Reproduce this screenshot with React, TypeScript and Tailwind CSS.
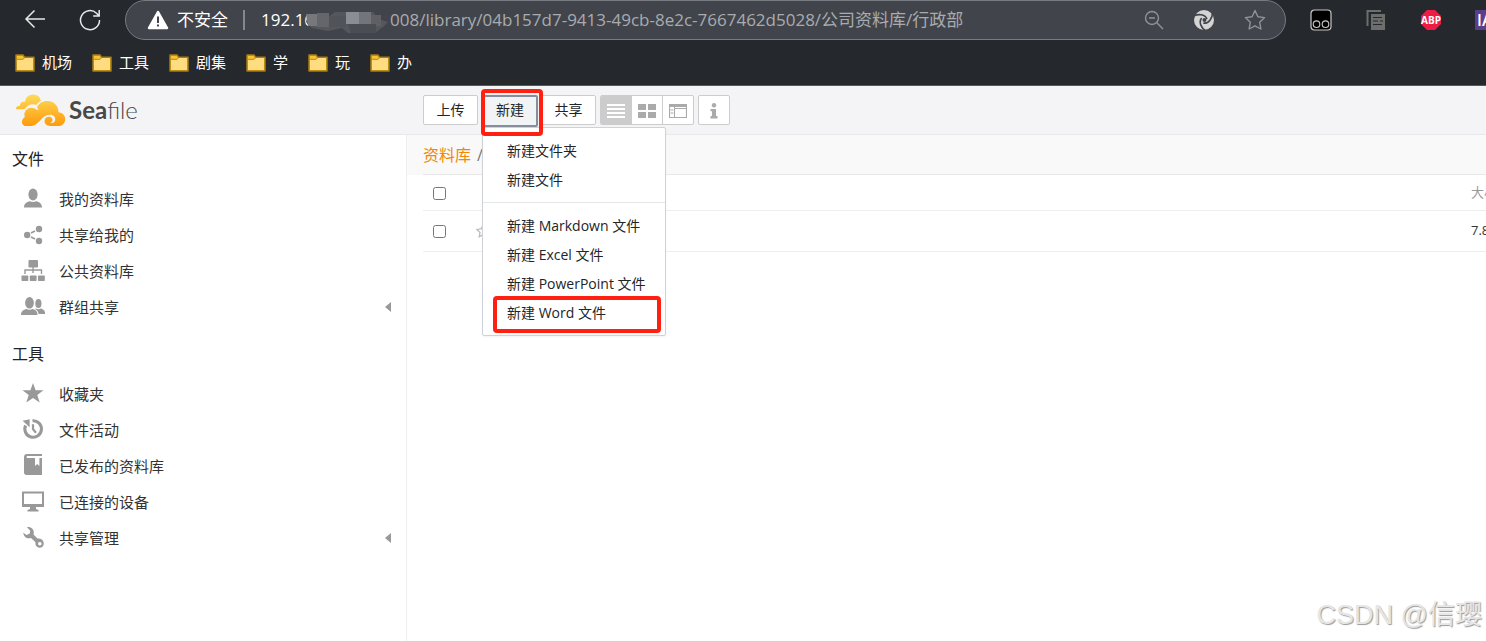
import { ReactNode } from "react";

const bookmarks = ["机场", "工具", "剧集", "学", "玩", "办"];

interface NavItem {
  label: string;
  icon: ReactNode;
  expandable?: boolean;
}

const fileItems: NavItem[] = [
  {
    label: "我的资料库",
    icon: (
      <>
        <ellipse cx="12" cy="8.5" rx="4.6" ry="6" />
        <path d="M3 21.5c0-4 2.5-5.5 6-6.3 1.800 1 4.200 1 6 0 3.500.8 6 2.300 6 6.300z" />
      </>
    ),
  },
  {
    label: "共享给我的",
    icon: (
      <>
        <circle cx="6.200" cy="13" r="3.200" />
        <circle cx="18" cy="7" r="3.200" />
        <circle cx="18" cy="19" r="3.200" />
        <path d="M10 11l4-2M10 15l4 2" stroke="currentColor" strokeWidth="1.800" />
      </>
    ),
  },
  {
    label: "公共资料库",
    icon: (
      <>
        <rect x="7.500" y="2" width="9.500" height="7.500" rx="0.8" />
        <path d="M12 9v6M4 16v-4h16.500v4" fill="none" stroke="currentColor" strokeWidth="1.400" />
        <rect x="0.5" y="17.500" width="6.800" height="5.500" rx="0.8" />
        <rect x="8.800" y="17.500" width="6.800" height="5.500" rx="0.8" />
        <rect x="17" y="17.500" width="6.800" height="5.500" rx="0.8" />
      </>
    ),
  },
  {
    label: "群组共享",
    expandable: true,
    icon: (
      <>
        <path d="M0 21c0-3.800 2.500-5.200 5.500-6 1.800 1 4.200 1 6 0 3 .8 5 2.200 5 6z" />
        <ellipse cx="8.500" cy="8.800" rx="4.400" ry="5.800" />
        <ellipse cx="17.400" cy="9.500" rx="3.100" ry="4.500" />
        <path d="M14.800 14.600c1.600.9 3.500.9 5 0 2.400.6 4.400 2 4.400 5.400h-6.600c-.3-2.300-1.500-4-3.600-5z" />
      </>
    ),
  },
];

const toolItems: NavItem[] = [
  {
    label: "收藏夹",
    icon: <path d="M12 2l2.600 7.200H22.500l-6.200 4.700 2.400 7.600L12 17l-6.700 4.500 2.400-7.600L1.500 9.200h7.900z" />,
  },
  {
    label: "文件活动",
    icon: (
      <>
        <path d="M11.500 3.700a8.300 8.300 0 1 1-6.900 4.800" fill="none" stroke="currentColor" strokeWidth="3" />
        <path d="M1.600 3.700l7-1.400v7.900z" />
        <path d="M12 7.200v5l3 3.600" fill="none" stroke="currentColor" strokeWidth="2.200" />
      </>
    ),
  },
  {
    label: "已发布的资料库",
    icon: (
      <path d="M6 1h15v2H6.500C5.300 3 5.300 5 6.500 5H14v8l2.200-2 2.200 2V5H21v17H5.500C4 22 3 21 3 19.500V4c0-2 1.200-3 3-3z" />
    ),
  },
  {
    label: "已连接的设备",
    icon: (
      <path
        fillRule="evenodd"
        d="M1 2.500h22V18h-8v2l2.500 1v1.500h-11V21L9 20v-2H1zM3 4.500V15h18V4.500z"
      />
    ),
  },
  {
    label: "共享管理",
    expandable: true,
    icon: (
      <path
        fillRule="evenodd"
        d="M6 2.200c3.300-.7 6.700 1.600 6.800 5 0 .9-.1 1.500-.3 2.200l4 4.200c3.400-.4 6.100 1.500 6.300 4.700.2 3-2.500 5.200-5.300 4.300-2.400-.8-3.500-3-3-5.300l-4.500-4.300c-4 1.300-7.400-1.200-7.700-5.200L5.600 9.900l3.200-1.300.4-2.800zM18.800 16.900a1.800 1.800 0 1 0 .1 3.600 1.800 1.800 0 0 0-.1-3.600z"
      />
    ),
  },
];

const officeTypes = ["Markdown", "Excel", "PowerPoint"];

const NavSection = ({ title, items }: { title: string; items: NavItem[] }) => (
  <section className="mb-[17px]">
    <h3 className="mb-2.5 pl-3 text-base leading-6 text-[#222]">{title}</h3>
    <ul>
      {items.map((item) => (
        <li key={item.label}>
          <a href="#" className="flex h-9 items-center gap-3.5 pr-[15px] pl-[21px] text-[15px] text-[#333]">
            <svg viewBox="0 0 24 24" className="-mt-0.5 size-6 shrink-0 text-[#999]" fill="currentColor">
              {item.icon}
            </svg>
            <span>{item.label}</span>
            {item.expandable && (
              <svg viewBox="0 0 6 10" className="ml-auto h-2.5 w-1.5" fill="#999">
                <path d="M6 0v10L0 5z" />
              </svg>
            )}
          </a>
        </li>
      ))}
    </ul>
  </section>
);

const MenuItem = ({ children, marked }: { children: ReactNode; marked?: boolean }) => (
  <li className="relative">
    <button className="block h-[29px] w-full px-6 text-left text-sm whitespace-nowrap text-[#212529]">{children}</button>
    {marked && (
      <span className="pointer-events-none absolute -top-0.5 right-1 -bottom-1.5 left-2.5 rounded border-4 border-[#ff2012]" />
    )}
  </li>
);

const Logo = () => (
  <a href="#" className="flex items-center gap-[3px]" aria-label="Seafile">
    <svg viewBox="0 0 50 33" className="h-[33px] w-[50px]">
      <defs>
        <linearGradient id="cloud" x1="0" y1="0" x2="0" y2="33" gradientUnits="userSpaceOnUse">
          <stop offset="0" stopColor="#fcdc5a" />
          <stop offset="1" stopColor="#ff9808" />
        </linearGradient>
      </defs>
      <path
        fill="url(#cloud)"
        d="M0 14.500c0-1.800 2-2.800 4-2.800C3.800 9 6 7.500 9 7.800 9.600 3.500 13 .5 17 .5c4.300 0 7.600 2.800 7.800 6.500-2 1-3.400 2.200-4.300 3.800-4-1.500-9-.3-11.200 3.600-3 1.200-8.800 1.300-9.300.1z"
      />
      <path
        fill="url(#cloud)"
        d="M11 32c-3.500.3-5.500-2-5-5 .3-1.800 1.400-3 2.900-4-1.900-4.500 1.600-9.300 6.600-9.300 1.900 0 3.500.7 4.700 1.900 1-.3 1.700 0 2.400.6-.3-1.400-1-2.300-1.700-2.900C22.700 9.300 26.700 7 31 7c6.600 0 11.600 4.700 11.500 11.300 4 .3 6.700 3.300 6.700 6.900 0 3.900-3 6.800-6.900 6.800H35c-4.800 0-7-3-6.300-6 .8-3.200 5.100-4.300 7.200-1.800 1.400 1.800.4 4.100-1.700 4 1 1.500 4.100.8 4.800-1.400 1-3.500-1.600-6.200-5-6-5.100 0-7.300 3.200-10.500 6.500L19 31c-1.500 1-5 1-8 1z"
      />
    </svg>
    <span className="font-[Lato] text-2xl leading-8 text-[#484848]">
      <b className="font-bold">Sea</b>
      <span className="font-light">file</span>
    </span>
  </a>
);

const BrowserBar = () => (
  <div className="h-[86px] border-b border-[#5a565e] bg-[#25282d] text-white">
    <div className="flex h-10 items-center">
      <div className="flex w-[125px] shrink-0 gap-[33px] pl-6">
        <button aria-label="后退">
          <svg viewBox="0 0 22 22" className="size-[22px]" fill="none" stroke="#e8e8e8" strokeWidth="1.500">
            <path d="M21 10H2M10.500 1.500L2 10l8.500 8.500" />
          </svg>
        </button>
        <button aria-label="刷新">
          <svg viewBox="0 0 22 22" className="size-[22px]" fill="none" stroke="#e8e8e8" strokeWidth="1.500">
            <path d="M20.500 11A9.500 9.500 0 1 1 17.500 4.200L20 6.800M20.200 1v6h-6" />
          </svg>
        </button>
      </div>
      <div className="flex h-10 min-w-0 flex-1 items-center rounded-full border border-[#777a80] bg-[#41454b] pr-[19px] pl-[21px] text-[17px]">
        <svg viewBox="0 0 22 20" className="h-5 w-[22px] shrink-0">
          <path d="M11 2L20 18H2z" fill="#fff" stroke="#fff" strokeWidth="2.500" strokeLinejoin="round" />
          <path d="M11 6.500v6.500M11 14.500v2" stroke="#41454b" strokeWidth="2" />
        </svg>
        <span className="ml-2 shrink-0">不安全</span>
        <span className="mr-4 ml-[15px] h-5 w-0.5 shrink-0 bg-[#85888d]" />
        <span className="shrink-0">192.16</span>
        <svg viewBox="0 0 84 30" className="relative -ml-2 h-[30px] w-[84px] shrink-0">
          <path d="M2 9h12l8 3 7-5h38l6 7 9 3-5 5-8 6H42l-6-5-14 3-16-3-6-6z" fill="#54575c" />
          <path d="M0 9h11v12H2z" fill="#77787b" />
          <path d="M11 8h12v14H11z" fill="#64666b" />
          <path d="M23 11h17v11H23z" fill="#505359" />
          <path d="M40 7h13v12H40z" fill="#8a8d94" />
          <path d="M53 7h12v12H53z" fill="#74757a" />
          <path d="M65 10h10v11H65z" fill="#5e6066" />
          <path d="M42 19h28v9H45z" fill="#4a4d54" />
        </svg>
        <input
          aria-label="地址"
          className="min-w-0 flex-1 bg-transparent text-[#a9abaf] outline-none"
          defaultValue="008/library/04b157d7-9413-49cb-8e2c-7667462d5028/公司资料库/行政部"
        />
        <div className="flex items-center gap-[30px]">
          <button aria-label="缩放">
            <svg viewBox="0 0 20 20" className="size-5" fill="none" stroke="#909296" strokeWidth="1.400">
              <circle cx="8" cy="8" r="6.500" />
              <path d="M12.800 12.800L19 19M5 8h6" />
            </svg>
          </button>
          <button aria-label="扩展">
            <svg viewBox="0 0 20 20" className="size-5">
              <circle cx="10" cy="10" r="10" fill="#d4d4d4" />
              <circle cx="10.500" cy="10" r="2" fill="#41454b" />
              <g fill="none" stroke="#41454b" strokeWidth="1.600">
                <path d="M-1 6.500C4 3.500 11 4 13 9" />
                <path d="M-1 6.500C4 3.500 11 4 13 9" transform="rotate(120 10 10)" />
                <path d="M-1 6.500C4 3.500 11 4 13 9" transform="rotate(240 10 10)" />
              </g>
            </svg>
          </button>
          <button aria-label="收藏">
            <svg viewBox="0 0 22 22" className="size-[22px]" fill="none" stroke="#909296" strokeWidth="1.400">
              <path
                d="M11 1.500l2.900 6.200 6.700.9-4.900 4.700 1.200 6.700-5.900-3.200L5.100 20l1.200-6.700L1.400 8.600l6.700-.9z"
                strokeLinejoin="round"
              />
            </svg>
          </button>
        </div>
      </div>
      <div className="flex w-[200px] shrink-0 items-center gap-[33px] overflow-hidden pl-6">
        <svg viewBox="0 0 22 22" className="size-[22px] shrink-0">
          <rect x="1" y="1" width="20" height="20" rx="3.500" fill="#000" stroke="#c8c8c8" strokeWidth="1.200" />
          <g fill="none" stroke="#c8c8c8" strokeWidth="1.100">
            <circle cx="6.500" cy="15.200" r="3.300" />
            <circle cx="15.500" cy="15.200" r="3.300" />
          </g>
        </svg>
        <svg viewBox="0 0 22 22" className="size-[22px] shrink-0">
          <path d="M2.500 17V2H16" fill="none" stroke="#6c6d6d" strokeWidth="2" />
          <path d="M6 5h14v16H6z" fill="#6c6d6d" />
          <path d="M8 8.500h9M8 12h5M15 12h3M8 15.500h9" stroke="#25282d" strokeWidth="1.200" />
        </svg>
        <span className="relative flex size-[22px] shrink-0 items-center justify-center">
          <svg viewBox="0 0 22 22" className="absolute size-[22px]">
            <path d="M7 1h8l6 6v8l-6 6H7l-6-6V7z" fill="#ee1c44" />
          </svg>
          <span className="relative text-[10px] leading-none font-bold">ABP</span>
        </span>
        <span className="flex h-5 w-5 shrink-0 items-center bg-[#5c3d8c] pl-0.5 text-base font-semibold">IA</span>
      </div>
    </div>
    <nav className="flex h-[45px] items-center gap-5 pl-[15px] text-[15px]">
      {bookmarks.map((name) => (
        <a key={name} href="#" className="flex items-center gap-[7px]">
          <svg viewBox="0 0 20 18" className="h-[18px] w-5">
            <path d="M1 1h7l1.500 2.200H19V17H1z" fill="#f5c430" stroke="#a87c10" strokeWidth="1.500" strokeLinejoin="round" />
            <path d="M2 5.800h5.800l2-1.800H18v12H2z" fill="#ffdc80" />
            <path d="M1.500 5.300h6.300l2-1.700" fill="none" stroke="#b98c18" />
          </svg>
          <span>{name}</span>
        </a>
      ))}
    </nav>
  </div>
);

const ToolButton = ({ children }: { children: ReactNode }) => (
  <button className="h-[30px] w-[55px] rounded-xs border border-[#ccc] bg-white text-sm text-[#212529]">{children}</button>
);

const Toolbar = () => (
  <div className="flex items-start gap-1 pt-[9px] pl-4">
    <ToolButton>上传</ToolButton>
    <div className="relative">
      <button className="h-8 w-[56px] rounded-xs border-2 border-[#868e9b] bg-[#f2f3f5] pb-0.5 text-sm text-[#212529]">
        新建
      </button>
      <ul className="absolute top-8 left-0 w-[184px] rounded-xs border border-[#cfd2da] bg-white py-2 shadow-xs">
        <MenuItem>新建文件夹</MenuItem>
        <MenuItem>新建文件</MenuItem>
        <li className="my-2 h-px bg-[#e4e6ea]" />
        {officeTypes.map((type) => (
          <MenuItem key={type}>新建 {type} 文件</MenuItem>
        ))}
        <MenuItem marked>新建 Word 文件</MenuItem>
      </ul>
      <span className="pointer-events-none absolute -top-1.5 -right-[5px] -bottom-[9px] -left-px rounded border-4 border-[#ff2012]" />
    </div>
    <div className="-ml-px">
      <ToolButton>共享</ToolButton>
    </div>
    <div className="flex h-[30px] divide-x divide-[#ccc] overflow-hidden rounded-xs border border-[#ccc] bg-white">
      <button aria-label="列表" className="flex w-[31px] items-center justify-center bg-[#ccc]">
        <svg viewBox="0 0 18 16" className="mt-0.5 h-4 w-[18px]" fill="#fff">
          <path d="M0 1h18v2H0zM0 5h18v2H0zM0 9h18v2H0zM0 13h18v2H0z" />
        </svg>
      </button>
      <button aria-label="网格" className="flex w-[31px] items-center justify-center">
        <svg viewBox="0 0 18 16" className="mt-0.5 h-4 w-[18px]" fill="#aaa">
          <path d="M0 1h8v6H0zM10 1h8v6h-8zM0 9h8v6H0zM10 9h8v6h-8z" />
        </svg>
      </button>
      <button aria-label="分栏" className="flex w-[30px] items-center justify-center">
        <svg viewBox="0 0 18 16" className="mt-0.5 h-4 w-[18px]" fill="none" stroke="#aaa">
          <path d="M.5 1.500h17v13H.5z" strokeWidth="1.200" />
          <path d="M1 2.500h16" strokeWidth="3" />
          <path d="M5.500 4v11M1.500 7h3M1.500 10h3M6 5.500h11" />
        </svg>
      </button>
    </div>
    <button aria-label="详情" className="flex h-[30px] w-8 items-center justify-center rounded-xs border border-[#ccc] bg-white">
      <svg viewBox="0 0 8 16" className="mt-0.5 h-4 w-2" fill="#aaa">
        <circle cx="4" cy="2.200" r="2.200" />
        <path d="M.5 6H6v7h1.500v2.500h-7V13H2V8.200H.5z" />
      </svg>
    </button>
  </div>
);

const FileList = () => (
  <main className="min-w-0 flex-1 overflow-hidden">
    <div className="bg-[#f9f9f9] pl-4">
      <div className="flex h-10 items-center gap-1.5 border-b border-[#e8e8e8] text-base">
        <a href="#" className="text-[#f08705]">资料库</a>
        <span className="text-[#777]">/</span>
      </div>
    </div>
    <div className="pl-4">
      <table className="w-[calc(100%+40px)] table-fixed border-collapse text-left text-[13px]">
        <colgroup>
          <col className="w-[53px]" />
          <col />
          <col className="w-[55px]" />
        </colgroup>
        <thead>
          <tr className="h-[35px] border-b border-[#eee]">
            <th className="pt-0.5 pl-2.5">
              <input type="checkbox" aria-label="全选" className="block" />
            </th>
            <th />
            <th className="font-normal whitespace-nowrap text-[#999]">大小</th>
          </tr>
        </thead>
        <tbody>
          <tr className="h-[41px] border-b border-[#eee]">
            <td className="pt-0.5 pl-2.5">
              <input type="checkbox" aria-label="选择" className="block" />
            </td>
            <td>
              <svg viewBox="0 0 22 22" className="size-3.5" fill="none" stroke="#bbb" strokeWidth="2">
                <path d="M11 1.500l2.900 6.200 6.700.9-4.900 4.700 1.200 6.700-5.900-3.200L5.100 20l1.200-6.700L1.400 8.600l6.700-.9z" />
              </svg>
            </td>
            <td className="whitespace-nowrap text-[#333]">7.8 KB</td>
          </tr>
        </tbody>
      </table>
    </div>
  </main>
);

const App = () => {
  return (
    <div className="relative flex min-h-screen flex-col overflow-hidden bg-white font-['Open_Sans','Noto_Sans_CJK_SC',sans-serif]">
      <BrowserBar />
      <header className="relative z-10 flex h-[49px] border-b border-[#e8e8e8] bg-[#f4f4f7]">
        <div className="flex w-[407px] shrink-0 items-center pl-4">
          <Logo />
        </div>
        <Toolbar />
      </header>
      <div className="flex flex-1">
        <aside className="w-[407px] shrink-0 border-r border-[#eee] pt-3">
          <NavSection title="文件" items={fileItems} />
          <NavSection title="工具" items={toolItems} />
        </aside>
        <FileList />
      </div>
      <div className="pointer-events-none absolute right-1 bottom-1.5 font-['Liberation_Sans','Noto_Sans_CJK_SC',sans-serif] text-[27px] leading-10 text-[#e6e6e6] [text-shadow:1px_1px_1px_#999]">
        CSDN @信璎
      </div>
    </div>
  );
};

export default App;
